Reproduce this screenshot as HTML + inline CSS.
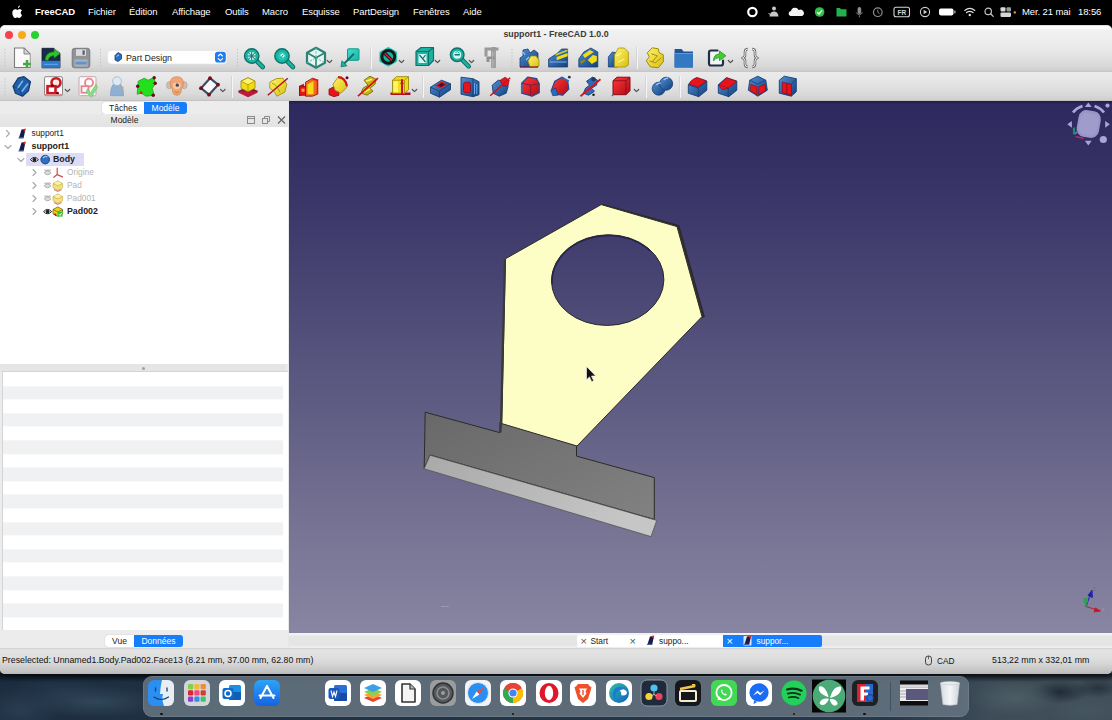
<!DOCTYPE html>
<html lang="fr">
<head>
<meta charset="utf-8">
<title>support1 - FreeCAD 1.0.0</title>
<style>
*{box-sizing:border-box;margin:0;padding:0}
html,body{width:1112px;height:720px;overflow:hidden}
body{position:relative;font-family:"Liberation Sans",sans-serif;font-size:9px;color:#222;background:#1d2b38}
.abs{position:absolute}
#desktop{left:0;top:640px;width:1112px;height:80px;
 background:
 linear-gradient(rgba(5,10,18,.0) 0,rgba(5,10,18,.0) 33px,rgba(5,10,18,.75) 34px,rgba(5,10,18,0) 42px),
 radial-gradient(ellipse 70px 16px at 95px 62px,rgba(58,80,100,.7) 0,rgba(58,80,100,0) 100%),
 radial-gradient(ellipse 40px 22px at 20px 70px,rgba(50,72,94,.6) 0,rgba(50,72,94,0) 100%),
 radial-gradient(ellipse 50px 14px at 60px 50px,rgba(40,60,82,.6) 0,rgba(40,60,82,0) 100%),
 radial-gradient(ellipse 45px 18px at 1015px 58px,rgba(78,94,102,.9) 0,rgba(78,94,102,0) 100%),
 radial-gradient(ellipse 40px 14px at 1085px 70px,rgba(70,86,96,.8) 0,rgba(70,86,96,0) 100%),
 radial-gradient(ellipse 30px 12px at 1060px 52px,rgba(24,36,48,.8) 0,rgba(24,36,48,0) 100%),
 radial-gradient(ellipse 25px 10px at 1098px 48px,rgba(28,40,52,.7) 0,rgba(28,40,52,0) 100%),
 linear-gradient(90deg,#1c2d3f 0,#1e3042 14%,#27384a 80%,#3d4c57 89%,#414f59 100%)}
#menubar{left:0;top:0;width:1112px;height:27px;background:#000;color:#fff;font-size:9.5px}
#menubar span{position:absolute;top:6px;white-space:nowrap;letter-spacing:-0.1px}
#win{left:0;top:26px;width:1112px;height:647.500px;background:#e8e8e8;border-radius:5px 5px 5px 5px;overflow:hidden;box-shadow:0 2px 6px rgba(0,0,0,.6)}
#title{left:0;top:0;width:1112px;height:18px;background:linear-gradient(#ffffff 0,#fdfdfd 2.500px,#f1f1f1 4px,#ececec 100%);}
#title .t{left:0;width:1112px;top:3px;text-align:center;font-size:8.8px;font-weight:bold;color:#3a3a3a}
.tl{width:8px;height:8px;border-radius:50%;top:4.500px}
#tb1{left:0;top:18px;width:1112px;height:28px;background:linear-gradient(#ececec 0,#e4e4e4 40%,#d8d8d8 80%,#cdcdcd 96%,#c2c2c2 100%)}
#tb2{left:0;top:46px;width:1112px;height:29px;background:linear-gradient(#ebebeb 0,#e6e6e6 30%,#dadada 75%,#cfcfcf 95%,#bcbcbc 100%)}
#left{left:0;top:75px;width:288px;height:549px;background:#ececec}
#view{left:288.500px;top:75px;width:823.500px;height:533px;background:linear-gradient(rgba(20,16,50,.55) 0,rgba(20,16,50,0) 3px),linear-gradient(#2d285d 0%,#2f2a5f 3%,#3b3769 20%,#4c4976 38%,#5a5780 52%,#747192 78%,#8986a3 100%)}
#tree{left:0;top:101px;width:288px;height:236.500px;background:#fff}
#props{left:2px;top:345px;width:286px;height:259px;background:#fff;border-left:1px solid #d4d4d4;border-top:1px solid #d4d4d4}
#status{left:0;top:622px;width:1112px;height:25.500px;background:linear-gradient(#cfcfcf 0,#e4e4e4 2px,#dedede 40%,#d3d3d3 65%,#c6c6c6 85%,#b9b9b9 100%)}

.tab{height:12px;top:76px;font-size:8.5px;text-align:center;line-height:12px;color:#222}
#tree .row{position:absolute;left:0;height:13px;width:288px;font-size:8.3px;line-height:13px;white-space:nowrap}
#tree .row span{position:absolute;top:0;z-index:4}
#tree .row span.hl{z-index:1}
#tree .chev{color:#9a9a9a;font-size:8px}
.gray{color:#b4b4b4}
#props{background:#fff linear-gradient(#fff,#fff) no-repeat}
#props i{position:absolute;left:0;top:0;width:280px;height:258px;background:repeating-linear-gradient(#fff 0,#fff 13.600px,#f0f1f3 13.600px,#f0f1f3 27.200px);background-position:0 0.400px}

#mdi{left:288.500px;top:607px;width:823.500px;height:16px;background:linear-gradient(#f3f3f3 0,#f0f0f0 2px,#e6e6e6 3px,#e4e4e4 12px,#eeeeee 14px,#ededed 100%)}
.mt{top:1.5px;height:12.5px;background:#fff;font-size:8.3px;line-height:12.5px;white-space:nowrap}
.mt span{position:absolute;top:0}
#status span{position:absolute;top:7px;font-size:8.8px;white-space:nowrap;color:#111}

#dock{left:143px;top:675.5px;width:825.5px;height:41px;border-radius:9px;background:rgba(101,115,128,.88);box-shadow:0 0 0 .5px rgba(255,255,255,.18) inset}
#dock svg{position:absolute;top:3.5px}
.dot{position:absolute;top:37px;width:2.4px;height:2.4px;border-radius:50%;background:#111}
</style>
</head>
<body>
<div id="desktop" class="abs"></div>
<div id="menubar" class="abs">
<span style="left:35px;font-weight:bold">FreeCAD</span>
<span style="left:88px">Fichier</span>
<span style="left:129px">Édition</span>
<span style="left:172px">Affichage</span>
<span style="left:225px">Outils</span>
<span style="left:262px">Macro</span>
<span style="left:302px">Esquisse</span>
<span style="left:353px">PartDesign</span>
<span style="left:413px">Fenêtres</span>
<span style="left:463px">Aide</span>
<span style="left:1022px">Mer. 21 mai</span>
<span style="left:1078px">18:56</span>
</div>
<svg class="abs" style="left:0;top:0" width="1112" height="25" viewBox="0 0 1112 25">
 <!-- apple -->
 <path d="M18.6,7.2c0.1,-1.2 0.9,-2.1 1.9,-2.4c0.1,1.2 -0.8,2.3 -1.9,2.4Z M22.3,14.6c-0.5,1.2 -1.4,2.6 -2.4,2.6c-0.8,0 -1.1,-0.5 -2,-0.5c-0.9,0 -1.3,0.5 -2,0.5c-1.2,0 -3,-2.6 -3,-5.1c0,-2.3 1.5,-3.6 3,-3.6c0.9,0 1.6,0.6 2.1,0.6c0.5,0 1.300,-0.7 2.4,-0.6c0.8,0 1.700,0.5 2.200,1.200c-1.800,1.100 -1.600,3.900 0.300,4.600Z" fill="#fff" transform="translate(-0.6,0.8)"/>
 <!-- status icons -->
 <circle cx="752.4" cy="12" r="4.2" fill="none" stroke="#fff" stroke-width="2.2"/>
 <g fill="#c8c8c8"><circle cx="774" cy="8.6" r="2"/><path d="M769.5,16.5q0.5,-5 4.5,-5q4,0 4.500,5Z"/><path d="M768.5,13.5l4,2" stroke="#c8c8c8" stroke-width="1"/></g>
 <path d="M790.5,16a2.600,2.600 0 0 1 0.500,-5.100a4,4 0 0 1 7.600,-0.800a3,3 0 0 1 3.600,5.900Z" fill="#f2f2f2"/>
 <circle cx="819.6" cy="12" r="4.800" fill="#2fc24a"/><path d="M817.200,12.200l1.800,1.800l3,-3.600" stroke="#fff" stroke-width="1.300" fill="none"/>
 <path d="M836.500,8h3.500l1,1.200h5.500v7.300h-10Z" fill="#22b24c"/>
 <rect x="857.600" y="7" width="3.600" height="7" rx="1.800" fill="#8c8c8c"/><path d="M856.200,12.500q3.200,4.500 6.400,0M859.400,15.500v1.800" stroke="#8c8c8c" stroke-width="0.900" fill="none"/>
 <circle cx="877.800" cy="12.200" r="4.300" fill="none" stroke="#8c8c8c" stroke-width="1.200"/><path d="M877.800,9.600v2.800l1.800,1" stroke="#8c8c8c" stroke-width="0.900" fill="none"/>
 <rect x="894" y="7.200" width="15.500" height="9.600" rx="2" fill="none" stroke="#d6d6d6" stroke-width="1.100"/>
 <text x="901.800" y="14.600" font-family="Liberation Sans, sans-serif" font-size="6.500" font-weight="bold" fill="#d6d6d6" text-anchor="middle">FR</text>
 <circle cx="925" cy="12" r="4.600" fill="none" stroke="#d0d0d0" stroke-width="1.100"/><path d="M923.600,9.800l3.600,2.200l-3.600,2.200Z" fill="#d0d0d0"/>
 <rect x="939" y="8.600" width="14.500" height="6.800" rx="1.800" fill="#fff"/><rect x="954.300" y="10.600" width="1.200" height="2.800" rx="0.600" fill="#bbb"/>
 <g fill="none" stroke="#dcdcdc" stroke-width="1.300" stroke-linecap="round"><path d="M964.800,10.400q5,-4 10,0"/><path d="M966.600,12.600q3.200,-2.600 6.400,0"/></g><circle cx="969.800" cy="15" r="1.200" fill="#dcdcdc"/>
 <circle cx="988.200" cy="11.400" r="3.200" fill="none" stroke="#c4c4c4" stroke-width="1.200"/><path d="M990.600,13.800l2.600,2.600" stroke="#c4c4c4" stroke-width="1.300" stroke-linecap="round"/>
 <g fill="#d8d8d8"><rect x="1000.500" y="7.200" width="5" height="4.200" rx="1"/><rect x="1006.500" y="7.200" width="4.500" height="4.200" rx="1" fill="#9a9a9a"/><rect x="1000.500" y="12.400" width="10.500" height="4.600" rx="1.200"/></g>
 <circle cx="1014.800" cy="12.400" r="1.200" fill="#f09a2a"/>
</svg>
<div class="abs" style="left:0;top:25.300px;width:1112px;height:7px;background:#fff;border-radius:5px 5px 0 0"></div>
<div id="win" class="abs">
 <div id="title" class="abs">
  <div class="abs tl" style="left:5px;background:#f4434c"></div>
  <div class="abs tl" style="left:18px;background:#f7ab1c"></div>
  <div class="abs tl" style="left:31px;background:#28d033"></div>
  <div class="abs t">support1 - FreeCAD 1.0.0</div>
 </div>
 <div id="tb1" class="abs"></div>
 <div id="tb2" class="abs"></div>
<!--TB--><svg class="abs" style="left:0;top:18px;z-index:5" width="1112" height="57" viewBox="0 44 1112 57">
<defs><linearGradient id="gbl" x1="0" y1="0" x2="1" y2="1"><stop offset="0" stop-color="#4f8fd8"/><stop offset="1" stop-color="#143f78"/></linearGradient><linearGradient id="gye" x1="0" y1="0" x2="1" y2="1"><stop offset="0" stop-color="#fff36a"/><stop offset="1" stop-color="#d9bf10"/></linearGradient><linearGradient id="gre" x1="0" y1="0" x2="1" y2="1"><stop offset="0" stop-color="#ff3a3a"/><stop offset="1" stop-color="#b00814"/></linearGradient><linearGradient id="gte" x1="0" y1="0" x2="1" y2="1"><stop offset="0" stop-color="#3fe0cf"/><stop offset="1" stop-color="#19b3a3"/></linearGradient></defs>
<rect x="4.5" y="49.0" width="1" height="1.4" fill="#c4c4c4"/><rect x="4.5" y="52.2" width="1" height="1.4" fill="#c4c4c4"/><rect x="4.5" y="55.4" width="1" height="1.4" fill="#c4c4c4"/><rect x="4.5" y="58.6" width="1" height="1.4" fill="#c4c4c4"/><rect x="4.5" y="61.8" width="1" height="1.4" fill="#c4c4c4"/><rect x="4.5" y="65.0" width="1" height="1.4" fill="#c4c4c4"/>
<rect x="100" y="49.0" width="1" height="1.4" fill="#c4c4c4"/><rect x="100" y="52.2" width="1" height="1.4" fill="#c4c4c4"/><rect x="100" y="55.4" width="1" height="1.4" fill="#c4c4c4"/><rect x="100" y="58.6" width="1" height="1.4" fill="#c4c4c4"/><rect x="100" y="61.8" width="1" height="1.4" fill="#c4c4c4"/><rect x="100" y="65.0" width="1" height="1.4" fill="#c4c4c4"/>
<rect x="237" y="49.0" width="1" height="1.4" fill="#c4c4c4"/><rect x="237" y="52.2" width="1" height="1.4" fill="#c4c4c4"/><rect x="237" y="55.4" width="1" height="1.4" fill="#c4c4c4"/><rect x="237" y="58.6" width="1" height="1.4" fill="#c4c4c4"/><rect x="237" y="61.8" width="1" height="1.4" fill="#c4c4c4"/><rect x="237" y="65.0" width="1" height="1.4" fill="#c4c4c4"/>
<g transform="translate(22.5,57.5)"><path d="M-8,-9.5h9.5l6,6v13.5h-15.500Z" fill="#fbfbfb" stroke="#7d7d7d" stroke-width="1.1" stroke-linejoin="round"/><path d="M1.500,-9.500v6h6Z" fill="#d6d6d6" stroke="#7d7d7d" stroke-width="0.9" stroke-linejoin="round"/><path d="M7,-3v12" stroke="#e2e2e2" stroke-width="1"/><path d="M4.500,2.500v8M0.500,6.500h8" stroke="#45a845" stroke-width="2.600"/></g>
<g transform="translate(51,57.8)"><path d="M-9,-9.500h12l6,5v14.500h-18Z" fill="#1a2a48" stroke="#0f1a30" stroke-width="0.8" stroke-linejoin="round"/><path d="M3,-9.500v5h6Z" fill="#eceff4"/><path d="M-6,2q1,-8 9,-8v-2.500l6,4.500l-6,4.500v-2.500q-5,0 -6,5Z" fill="#2fc22f" stroke="#0f7a12" stroke-width="0.7"/><rect x="-9" y="3" width="18" height="7" fill="#2f78cc"/><path d="M-7,6.500h14" stroke="#6aa8ea" stroke-width="1"/></g>
<g transform="translate(81,57.8)"><rect x="-8.800" y="-9.500" width="17.600" height="19.500" rx="2.500" fill="#8e9498" stroke="#70767a" stroke-width="0.9"/><rect x="-5" y="-8.500" width="10" height="6.500" fill="#dcdcdc"/><rect x="1.500" y="-7.500" width="2.200" height="4.500" fill="#5a5f63"/><rect x="-6.500" y="1.500" width="13" height="7.500" fill="#a9afb4"/><rect x="-5.500" y="4" width="11" height="2.600" fill="#5b92d8"/></g>
<rect x="107.500" y="50.500" width="119.500" height="13.500" rx="4" fill="#fff" stroke="#e0e0e0" stroke-width="0.600"/><rect x="215" y="51.800" width="10.800" height="10.800" rx="2.800" fill="#1d7cf2"/><path d="M218.200,56l2.200,-2l2.200,2M218.200,58.600l2.200,2l2.200,-2" fill="none" stroke="#fff" stroke-width="1.100" stroke-linecap="round" stroke-linejoin="round"/><path d="M115,55.500l3,-3l3.500,2v4.500l-3.500,2.500l-3,-1.500Z" fill="#2b6dba" stroke="#143f78" stroke-width="0.800"/><path d="M116.500,56.500l2.500,-1.500" stroke="#bcd8f5" stroke-width="1"/><text x="126" y="60.500" font-family="Liberation Sans, sans-serif" font-size="8.800" fill="#222">Part Design</text>
<g transform="translate(251.7,56)"><path d="M5.0,5.0L11,11" stroke="#0f7268" stroke-width="4.600" stroke-linecap="round"/><path d="M5.0,5.0L11,11" stroke="#19b3a3" stroke-width="2.600" stroke-linecap="round"/><circle r="7.2" fill="#19b3a3" stroke="#0f7268" stroke-width="1.400"/><circle r="4.200" fill="#bff3ec"/><path d="M-4.500,0h9M0,-4.500v9M-3.200,-3.200l6.400,6.400M3.200,-3.200l-6.400,6.400" stroke="#0f7268" stroke-width="1"/></g>
<g transform="translate(282,56)"><path d="M5.0,5.0L11,11" stroke="#0f7268" stroke-width="4.600" stroke-linecap="round"/><path d="M5.0,5.0L11,11" stroke="#19b3a3" stroke-width="2.600" stroke-linecap="round"/><circle r="7.2" fill="#19b3a3" stroke="#0f7268" stroke-width="1.400"/><circle r="4.200" fill="#22c9b6"/><circle cx="0.500" cy="-0.500" r="2" fill="#e9fffb"/><path d="M-1,1.500l2.500,-3" stroke="#0f7268" stroke-width="0.900"/></g>
<g transform="translate(316,57.8)"><path d="M0,-10l9,5v10l-9,5l-9,-5v-10Z" fill="#e4f5f2" stroke="#2e8278" stroke-width="2.200" stroke-linejoin="round"/><path d="M-9,-5l9,5l9,-5M0,0v10" fill="none" stroke="#2e8278" stroke-width="1.600"/><path d="M-9,5l9,-5l9,5M0,-10v10" fill="none" stroke="#5fb5aa" stroke-width="1" stroke-dasharray="2 1.500"/></g>
<path d="M327.3,60.5l2.2,2.2l2.2,-2.2" fill="none" stroke="#555" stroke-width="1.2" stroke-linecap="round" stroke-linejoin="round"/>
<g transform="translate(350,57.8)"><rect x="-2.500" y="-9" width="11.500" height="11.500" rx="1" fill="url(#gte)" stroke="#109a8c" stroke-width="1"/><path d="M4,-4L-6.500,6.500" stroke="#0f7268" stroke-width="2"/><path d="M-9,9l1,-6l5,5Z" fill="#19b3a3" stroke="#0f7268" stroke-width="0.800"/></g>
<rect x="370" y="47" width="1" height="22" fill="#d4d4d4"/><rect x="371" y="47" width="1" height="22" fill="#f6f6f6"/>
<g transform="translate(388.3,56.8)"><path d="M0,-9.500l8.500,4.800v9.400l-8.500,4.800l-8.500,-4.800v-9.400Z" fill="#19b3a3" stroke="#2ad0bd" stroke-width="0.800"/><circle r="6.400" fill="none" stroke="#181818" stroke-width="3"/><path d="M-4.300,-4.300l8.600,8.600" stroke="#181818" stroke-width="3.400"/><path d="M-3.600,-3.600l7.200,7.200" stroke="#e01822" stroke-width="1.500"/></g>
<path d="M399.3,60.5l2.2,2.2l2.2,-2.2" fill="none" stroke="#555" stroke-width="1.2" stroke-linecap="round" stroke-linejoin="round"/>
<g transform="translate(424.5,57)"><path d="M-8.500,-5.500l5,-4h12.500v13l-5,5h-12.500Z" fill="#19b3a3" stroke="#0f7268" stroke-width="1.200" stroke-linejoin="round"/><path d="M-8.500,-5.500h12.500v14M4,-5.500l5,-4" fill="none" stroke="#0f7268" stroke-width="1.100"/><rect x="-6" y="-3" width="8" height="9" fill="#d8f6f2"/><path d="M-5,-2l6,7M1,-2l-3,4" stroke="#0f7268" stroke-width="1.200"/></g>
<path d="M435.3,60.5l2.2,2.2l2.2,-2.2" fill="none" stroke="#555" stroke-width="1.2" stroke-linecap="round" stroke-linejoin="round"/>
<g transform="translate(457.2,54.8)"><path d="M4.8,4.8L11.5,11.5" stroke="#0f7268" stroke-width="4.600" stroke-linecap="round"/><path d="M4.8,4.8L11.5,11.5" stroke="#19b3a3" stroke-width="2.600" stroke-linecap="round"/><circle r="6.8" fill="#19b3a3" stroke="#0f7268" stroke-width="1.400"/><circle r="4" fill="#d4f7f2"/><path d="M-2.600,0h5.200" stroke="#0f7268" stroke-width="1.500"/><path d="M-2,-2.500q3,-1.500 4.500,1" stroke="#19b3a3" stroke-width="1" fill="none"/></g>
<path d="M469.3,60.5l2.2,2.2l2.2,-2.2" fill="none" stroke="#555" stroke-width="1.2" stroke-linecap="round" stroke-linejoin="round"/>
<g transform="translate(492.5,57.5)"><path d="M-1,-10h4v20h-4Z" fill="#a4a4a4" stroke="#8a8a8a" stroke-width="0.600"/><path d="M-8,-10h14v3h-4v2h-3v-2h-4v6h-3Z" fill="#9a9a9a"/><path d="M-6,-1h8v2.500h-5v3h-3Z" fill="#8f8f8f"/><path d="M0,-6v15" stroke="#c8c8c8" stroke-width="0.800" stroke-dasharray="1 1"/></g>
<rect x="511.5" y="49.0" width="1" height="1.4" fill="#c4c4c4"/><rect x="511.5" y="52.2" width="1" height="1.4" fill="#c4c4c4"/><rect x="511.5" y="55.4" width="1" height="1.4" fill="#c4c4c4"/><rect x="511.5" y="58.6" width="1" height="1.4" fill="#c4c4c4"/><rect x="511.5" y="61.8" width="1" height="1.4" fill="#c4c4c4"/><rect x="511.5" y="65.0" width="1" height="1.4" fill="#c4c4c4"/>
<g transform="translate(529,58)"><path d="M-9,9v-9l3,-2v-6l5,-1l2,4l4,-3l4,3v14Z" fill="url(#gbl)" stroke="#143f78" stroke-width="0.800" stroke-linejoin="round"/><path d="M-6,-6l2,3M-3,2l3,-3" stroke="#9cc8f5" stroke-width="1.200"/><path d="M-1,3l3,-5h5l3,4v6l-3,1h-6Z" fill="url(#gye)" stroke="#9a8a0a" stroke-width="0.700"/><path d="M-9,9h18" stroke="#8a0a18" stroke-width="1"/></g>
<g transform="translate(558.6,58)"><path d="M-10,9v-8l9,-6l4,-4h6v18Z" fill="url(#gbl)" stroke="#143f78" stroke-width="0.800" stroke-linejoin="round"/><path d="M-2,-1l11,-4v3.200l-11,4Z" fill="#f2dc18"/><path d="M-3,-4l12,-4.500v1.800l-12,4.500Z" fill="#f2dc18" opacity=".85"/><path d="M-9,4h17" stroke="#7fb2ea" stroke-width="1"/></g>
<g transform="translate(588.8,58)"><path d="M-10,9v-8l5,-7l7,-4l7,4v15Z" fill="url(#gbl)" stroke="#143f78" stroke-width="0.800" stroke-linejoin="round"/><path d="M-6,-3l7,-5l4,2l-9,6Z" fill="#f2dc18"/><path d="M-1,2l5,-5l4,1v5l-5,3Z" fill="#f2dc18"/><path d="M-8,5l4,-3" stroke="#9a8a0a" stroke-width="2"/></g>
<g transform="translate(618.4,58)"><path d="M-10,9v-10l4,-5l5,1v14Z" fill="url(#gbl)" stroke="#143f78" stroke-width="0.800" stroke-linejoin="round"/><path d="M-4,-3l4,-7h6l4,4v13l-3,2h-11Z" fill="url(#gye)" stroke="#9a8a0a" stroke-width="0.700" stroke-linejoin="round"/><path d="M-2,-2l5,-3M0,4l6,-3" stroke="#fff79a" stroke-width="1.300"/></g>
<rect x="636" y="47" width="1" height="22" fill="#d4d4d4"/><rect x="637" y="47" width="1" height="22" fill="#f6f6f6"/>
<g transform="translate(654.3,57.8)"><path d="M-2,-10l6,1l1,4l4,2v7l-5,6l-8,-1l-4,-6l3,-4l-2,-4Z" fill="url(#gye)" stroke="#9a8a0a" stroke-width="1" stroke-linejoin="round"/><path d="M-3,-4l6,2l-5,6M-5,3l6,2l6,-5" fill="none" stroke="#9a8a0a" stroke-width="0.900"/></g>
<g transform="translate(683.8,58)"><path d="M-9.200,-9h7l2,2.500h9.400v16h-18.400Z" fill="#1f5596"/><rect x="-9.200" y="-5" width="18.400" height="14.500" rx="0.800" fill="#3378c2"/><path d="M-9.200,-4.500h18.400" stroke="#5b9ae0" stroke-width="1"/></g>
<g transform="translate(716.5,58)"><path d="M1,-7.500h-6.500q-2,0 -2,2v11q0,2 2,2h10q2,0 2,-2v-3" fill="#f2f4f6" stroke="#1c2e4a" stroke-width="2.200" stroke-linecap="round"/><path d="M-3,3q0,-7 6,-7v-3l6.500,4.800l-6.500,4.800v-3q-4,0 -6,3.400Z" fill="#3ccf2f" stroke="#1c8a18" stroke-width="0.700"/></g>
<path d="M728.3,60.5l2.2,2.2l2.2,-2.2" fill="none" stroke="#555" stroke-width="1.2" stroke-linecap="round" stroke-linejoin="round"/>
<g transform="translate(750,58)"><path d="M-2,-9q-3,0 -3,3v3q0,2.500 -2.500,3q2.500,0.500 2.500,3v3q0,3 3,3M2,-9q3,0 3,3v3q0,2.500 2.500,3q-2.500,0.500 -2.500,3v3q0,3 -3,3" fill="none" stroke="#6d6d6d" stroke-width="2.600" stroke-linejoin="round"/><path d="M-2,-9q-3,0 -3,3v3q0,2.500 -2.500,3q2.500,0.500 2.500,3v3q0,3 3,3M2,-9q3,0 3,3v3q0,2.500 2.500,3q-2.500,0.500 -2.500,3v3q0,3 -3,3" fill="none" stroke="#f0f0f0" stroke-width="0.900"/></g>
<rect x="4.5" y="78.0" width="1" height="1.4" fill="#c4c4c4"/><rect x="4.5" y="81.2" width="1" height="1.4" fill="#c4c4c4"/><rect x="4.5" y="84.4" width="1" height="1.4" fill="#c4c4c4"/><rect x="4.5" y="87.6" width="1" height="1.4" fill="#c4c4c4"/><rect x="4.5" y="90.8" width="1" height="1.4" fill="#c4c4c4"/><rect x="4.5" y="94.0" width="1" height="1.4" fill="#c4c4c4"/>
<g transform="translate(21.5,86.2)"><path d="M-8.500,0l5,-8l6,-1.500l6.500,5l-2,9l-6,5.500l-7,-3Z" fill="#1f5ea8" stroke="#123a70" stroke-width="1.200" stroke-linejoin="round"/><path d="M-4,2l5,-7M0.500,5l5.500,-7" stroke="#7fb4ea" stroke-width="1.600" stroke-linecap="round"/><path d="M-8.500,0l7,3l2,7" fill="none" stroke="#143f78" stroke-width="0.800"/></g>
<g transform="translate(53.5,86.2)"><rect x="-9" y="-9.500" width="18" height="19" rx="1.500" fill="#fafafa" stroke="#8a8a8a" stroke-width="1"/><circle cx="2.500" cy="-3.500" r="4.500" fill="#fdeaea" stroke="#cc1822" stroke-width="2.600"/><rect x="-6" y="0" width="8" height="7" fill="#fff" stroke="#cc1822" stroke-width="2.600"/><circle cx="-1" cy="-0.500" r="1.400" fill="#5a0a14"/><circle cx="4" cy="7" r="1.400" fill="#5a0a14"/><path d="M-9,8.500h18" stroke="#e08a90" stroke-width="1.400"/></g>
<path d="M65.3,89.5l2.2,2.2l2.2,-2.2" fill="none" stroke="#555" stroke-width="1.2" stroke-linecap="round" stroke-linejoin="round"/>
<g transform="translate(87.5,86.2)"><rect x="-8.500" y="-9.500" width="17" height="19" rx="1.500" fill="#fbfbfb" stroke="#c9a4a8" stroke-width="1"/><circle cx="1.500" cy="-3.500" r="4" fill="none" stroke="#e6858b" stroke-width="1.800"/><rect x="-6" y="0" width="7" height="6.500" fill="#fff" stroke="#e6858b" stroke-width="1.800"/><path d="M0,2.500l3,4l5.500,-8.500l1.500,3l-6,10l-5.500,-5Z" fill="#8fd98a" stroke="#6cbf68" stroke-width="0.600"/></g>
<g transform="translate(117,86.2)"><path d="M-6.500,9.500q0,-10 4,-12h5q4,2 4,12Z" fill="#8eb0d2" stroke="#7a9cc0" stroke-width="0.700"/><circle cx="0" cy="-5" r="4.400" fill="#dfe9f2" stroke="#9bb6d0" stroke-width="0.800"/><path d="M3,3l3.500,-2" stroke="#caa48a" stroke-width="1.600"/></g>
<g transform="translate(146.2,86.2)"><path d="M-8,-5l6,-3l4,2l6,-3l1,7l-3,4l2,7l-8,1l-5,-3l-4,1Z" fill="#23e01c" stroke="#18a814" stroke-width="0.800" stroke-linejoin="round"/><circle cx="8" cy="-8.500" r="1.700" fill="#6a0a14"/><circle cx="9" cy="-3" r="1.700" fill="#6a0a14"/><circle cx="-8.500" cy="0" r="1.700" fill="#6a0a14"/><circle cx="7" cy="9" r="1.700" fill="#6a0a14"/><circle cx="-5" cy="6.500" r="1.300" fill="#c01a1a"/></g>
<g transform="translate(176.8,86.2)"><ellipse cx="-7.500" cy="-1" rx="2.800" ry="3.600" fill="#d9b9a4" stroke="#a9a9a9" stroke-width="0.700"/><ellipse cx="7.500" cy="-1" rx="2.800" ry="3.600" fill="#d9b9a4" stroke="#a9a9a9" stroke-width="0.700"/><path d="M-6.500,-3q0,-6.500 6.500,-6.500q6.500,0 6.500,6.500q0,4 -2,6q0,6 -4.500,6q-4.500,0 -4.500,-6q-2,-2 -2,-6Z" fill="#f2a572" stroke="#c9855a" stroke-width="0.700"/><path d="M-4,-2q2,-3 4,0q2,-3 4,0q0,5 -4,5q-4,0 -4,-5Z" fill="#f7c9a4"/><circle cx="0.500" cy="-1" r="1.600" fill="#394a66"/><path d="M-2,5.500q2,1.500 4,0" stroke="#b06a44" stroke-width="0.800" fill="none"/></g>
<g transform="translate(209.5,86.2)"><path d="M-8.500,2l9,-10l8,6.500l-9,10Z" fill="#f6f8fa" stroke="#3c4e60" stroke-width="2.200" stroke-linejoin="round"/><circle cx="-8.500" cy="2" r="1.900" fill="#7a0a1a"/><circle cx="0.500" cy="-8" r="1.900" fill="#7a0a1a"/><circle cx="8.500" cy="-1.500" r="1.900" fill="#7a0a1a"/><circle cx="-0.500" cy="8.500" r="1.900" fill="#7a0a1a"/></g>
<path d="M220.60000000000002,89.5l2.2,2.2l2.2,-2.2" fill="none" stroke="#555" stroke-width="1.2" stroke-linecap="round" stroke-linejoin="round"/>
<rect x="231" y="76" width="1" height="22" fill="#d4d4d4"/><rect x="232" y="76" width="1" height="22" fill="#f6f6f6"/>
<g transform="translate(248,86.2)"><path d="M-9.500,5l9.500,-4l9.500,4l-9.500,4.500Z" fill="#8a1030" stroke="#5a0a20" stroke-width="0.800"/><path d="M-9.500,5v1.500l9.500,4.500l9.500,-4.500v-1.500" fill="#c01a3a"/><path d="M-7,-5l7,-3.500l7,3.500v7l-7,3.500l-7,-3.500Z" fill="#f2dc18" stroke="#9a8a0a" stroke-width="0.800" stroke-linejoin="round"/><path d="M-7,-5l7,3.500l7,-3.500l-7,-3.500Z" fill="#fff36a" stroke="#9a8a0a" stroke-width="0.700"/><path d="M0,-1.500v7" stroke="#9a8a0a" stroke-width="0.700"/></g>
<g transform="translate(277.8,86.2)"><path d="M-8,-4q6,-5 13,-4l4,6l-2,8l-8,4q-2,-6 -7,-8Z" fill="url(#gye)" stroke="#9a8a0a" stroke-width="0.800" stroke-linejoin="round"/><path d="M-6,-3q5,1 8,9" fill="none" stroke="#9a8a0a" stroke-width="0.800"/><path d="M-10,9l20,-17" stroke="#b01020" stroke-width="1.500"/></g>
<g transform="translate(308.5,86.2)"><path d="M-9,0l4,-2v10l-4,1.500Z" fill="#e8141c" stroke="#8a0a18" stroke-width="0.700"/><rect x="-9" y="0" width="7" height="9" fill="#e8141c" stroke="#8a0a18" stroke-width="0.800"/><rect x="-7" y="2.500" width="3" height="3" fill="#ffb12a"/><path d="M-3,-4l7,-4l5,2v14l-5,2h-7Z" fill="#f26a1a" stroke="#8a0a18" stroke-width="0.800" stroke-linejoin="round"/><path d="M-1,-2l6,-3v13h-6Z" fill="#f2dc18"/><path d="M4,-7.500l5,1.500v14" fill="none" stroke="#e01818" stroke-width="1.600"/></g>
<g transform="translate(338,86.2)"><path d="M-9,3l6,-3l4,3v6l-5,1.500l-5,-2Z" fill="#e8141c" stroke="#8a0a18" stroke-width="0.800" stroke-linejoin="round"/><path d="M-5,-2l5,-7l7,3l2,7l-6,6l-6,-3Z" fill="url(#gye)" stroke="#9a8a0a" stroke-width="0.800" stroke-linejoin="round"/><path d="M0,-9q7,0 9,9" fill="none" stroke="#d01818" stroke-width="2.200"/><circle cx="9" cy="-8.500" r="1.500" fill="#5a0a20"/></g>
<g transform="translate(368,86.2)"><path d="M-4,-6l6,-4l6,3l-1,5l-5,4l3,3l-6,4l-6,-2l2,-5l5,-3Z" fill="#c9b418" stroke="#7a6c0a" stroke-width="0.900" stroke-linejoin="round"/><path d="M-2,-5l6,-2M-4,6l6,-3" stroke="#fff36a" stroke-width="1.500"/><path d="M-10,10l20,-18" stroke="#d01018" stroke-width="1.600"/></g>
<g transform="translate(400.5,86.2)"><path d="M-10,7.500h20" stroke="#b01020" stroke-width="2.400"/><path d="M-8,-6l4,-3.500h12v13l-4,3.500h-12Z" fill="#f2dc18" stroke="#9a8a0a" stroke-width="0.900" stroke-linejoin="round"/><path d="M-8,-6h12v13M4,-6l4,-3.500" fill="none" stroke="#9a8a0a" stroke-width="0.800"/><rect x="-7" y="-5" width="4.500" height="11" fill="#fff36a"/><path d="M1.500,-7v15" stroke="#d01018" stroke-width="2"/><circle cx="1.500" cy="-3" r="1.500" fill="#d01018"/></g>
<path d="M412.3,89.5l2.2,2.2l2.2,-2.2" fill="none" stroke="#555" stroke-width="1.2" stroke-linecap="round" stroke-linejoin="round"/>
<rect x="422" y="76" width="1" height="22" fill="#d4d4d4"/><rect x="423" y="76" width="1" height="22" fill="#f6f6f6"/>
<g transform="translate(440.5,86.2)"><path d="M-10,1l11,-7l9,3.500v6l-11,7.500l-9,-4Z" fill="url(#gbl)" stroke="#143f78" stroke-width="0.900" stroke-linejoin="round"/><path d="M-10,1l9,4l11,-7.500M-1,5v6" fill="none" stroke="#143f78" stroke-width="0.800"/><path d="M-4,-0.500l5,-3.500l4.500,2l-5,3.500Z" fill="#4a0a28" stroke="#d8141c" stroke-width="1.300"/></g>
<g transform="translate(470,86.2)"><path d="M-9,-9l12,1.500l6,3v13l-6,2l-12,-2.500Z" fill="url(#gbl)" stroke="#143f78" stroke-width="0.900" stroke-linejoin="round"/><path d="M3,-7.500v18" stroke="#143f78" stroke-width="0.800"/><rect x="-6.500" y="-4" width="7" height="10.500" rx="2" fill="#e8141c" stroke="#8a0a18" stroke-width="0.700"/><path d="M4.500,-3v11M6.800,-2v10" stroke="#6aa8ea" stroke-width="1"/></g>
<g transform="translate(500.2,86.2)"><path d="M-8,-1l6,-5l6,1l4,5l-2,7l-7,3l-6,-3Z" fill="url(#gbl)" stroke="#143f78" stroke-width="0.900" stroke-linejoin="round"/><path d="M0,-6l5,-3l4,3l-1,5l-5,1Z" fill="#e8141c" stroke="#8a0a18" stroke-width="0.700"/><path d="M-10,9.500l20,-18" stroke="#d01018" stroke-width="1.500"/></g>
<g transform="translate(530.2,86.2)"><path d="M-8.500,-3l6,-6l9,1.500l2.500,5v9l-7,3.500l-10.500,-3Z" fill="url(#gre)" stroke="#2a4a8a" stroke-width="1.300" stroke-linejoin="round"/><path d="M-8.500,-3l9,2l8.500,-1.500M0.500,-1v11" fill="none" stroke="#7a1a3a" stroke-width="0.900"/><path d="M-8.500,-3v10" stroke="#2f74c0" stroke-width="1.600"/></g>
<g transform="translate(559.8,86.2)"><path d="M-8,3l3,-8l7,-4l6,4l1,8l-6,6l-8,-1Z" fill="url(#gre)" stroke="#2a4a8a" stroke-width="1.200" stroke-linejoin="round"/><path d="M-9,4l5,-2l2,7l-5,0.500Z" fill="#2b6dba" stroke="#143f78" stroke-width="0.700"/><path d="M2,-9l7,4" stroke="#2b6dba" stroke-width="1.800"/><circle cx="9.500" cy="-9" r="1.400" fill="#2a3a5a"/></g>
<g transform="translate(590.5,86.2)"><path d="M-4,-5l6,-4l5,3l-1,5l-5,3l3,3l-6,4l-5,-2l2,-5l4,-3Z" fill="#2b6dba" stroke="#143f78" stroke-width="0.900" stroke-linejoin="round"/><circle cx="3" cy="-7" r="2.200" fill="#2a3a5a"/><path d="M-10,10l20,-17" stroke="#e01018" stroke-width="1.800"/><circle cx="3" cy="8.500" r="1.300" fill="#222"/></g>
<g transform="translate(621.5,86.2)"><path d="M-8.500,-5.500l4,-3.500h13v13.500l-4,4h-13Z" fill="url(#gre)" stroke="#8a0a18" stroke-width="1" stroke-linejoin="round"/><path d="M-8.500,-5.500h13v14M4.500,-5.500l4,-3.500" fill="none" stroke="#8a0a18" stroke-width="0.800"/><path d="M-8.500,8.500l-1,1.500" stroke="#2b6dba" stroke-width="1.200"/></g>
<path d="M634.3,89.5l2.2,2.2l2.2,-2.2" fill="none" stroke="#555" stroke-width="1.2" stroke-linecap="round" stroke-linejoin="round"/>
<rect x="645" y="76" width="1" height="22" fill="#d4d4d4"/><rect x="646" y="76" width="1" height="22" fill="#f6f6f6"/>
<g transform="translate(662.2,86.2)"><circle cx="-3.500" cy="2.500" r="6.500" fill="url(#gbl)" stroke="#143f78" stroke-width="0.800"/><circle cx="4" cy="-2.500" r="6.500" fill="url(#gbl)" stroke="#143f78" stroke-width="0.800"/><path d="M-6,-1q2,-2.500 4.500,-2M1.500,-6q2,-2.500 4.500,-2" stroke="#9cc8f5" stroke-width="1.200" fill="none"/></g>
<rect x="679" y="76" width="1" height="22" fill="#d4d4d4"/><rect x="680" y="76" width="1" height="22" fill="#f6f6f6"/>
<g transform="translate(697.8,86.2)"><path d="M-9.500,-1.500l8,-7l10.500,3.500v9l-8,6.500l-10.500,-3.500Z" fill="url(#gbl)" stroke="#143f78" stroke-width="0.900" stroke-linejoin="round"/><path d="M-9,-2q3,-6 9,-6.500l8.500,3l-8,6.500Z" fill="#e8141c" stroke="#8a0a18" stroke-width="0.700"/><path d="M-9.500,-1.500l10,3.500l8.500,-6.500M0.500,2v8.500" fill="none" stroke="#143f78" stroke-width="0.800"/></g>
<g transform="translate(727.8,86.2)"><path d="M-9.500,-1.500l8,-7l10.500,3.500v9l-8,6.500l-10.500,-3.500Z" fill="url(#gbl)" stroke="#143f78" stroke-width="0.900" stroke-linejoin="round"/><path d="M-9,-1l8,-7.500l10,3.500l-8.500,7Z" fill="#e8141c" stroke="#8a0a18" stroke-width="0.700"/><path d="M-9.500,-1l4,4.500l6,-1.500" fill="#e8141c" stroke="#8a0a18" stroke-width="0.600"/><path d="M0.500,2v8.500" stroke="#143f78" stroke-width="0.800"/></g>
<g transform="translate(757.8,86.2)"><path d="M-8,-6l8,-4l8,4l1.500,10l-9.500,6l-9.500,-6Z" fill="url(#gbl)" stroke="#143f78" stroke-width="0.900" stroke-linejoin="round"/><path d="M-7,-2l6,2.500v8l-6.500,-4Z" fill="#e8141c" stroke="#8a0a18" stroke-width="0.600"/><path d="M1,0.500l6,-2.500l0.800,6.500l-6.800,4Z" fill="#e8141c" stroke="#8a0a18" stroke-width="0.600"/><path d="M-8,-6l8,4l8,-4" fill="none" stroke="#143f78" stroke-width="0.800"/></g>
<g transform="translate(787.8,86.2)"><path d="M-8.500,-6l5,-4l12,2.500v13l-5,4.500l-12,-3Z" fill="url(#gbl)" stroke="#143f78" stroke-width="0.900" stroke-linejoin="round"/><path d="M-5.500,-4l9,2v11l-9,-2.500Z" fill="#e8141c" stroke="#8a0a18" stroke-width="0.700"/><path d="M-1,-3v11" stroke="#8a0a18" stroke-width="0.900"/><path d="M3.500,-2l5,-5.500" stroke="#143f78" stroke-width="0.800"/></g>
</svg>
<!--/TB-->
 <div id="left" class="abs">
  <div class="abs tab" style="left:102px;top:1px;width:42px;height:12px;background:#fff;border-radius:3px 0 0 3px;box-shadow:0 0 1px rgba(0,0,0,.35)">Tâches</div>
  <div class="abs tab" style="left:144px;top:1px;width:43px;height:12px;background:#167efb;color:#fff;border-radius:0 3px 3px 0">Modèle</div>
  <div class="abs" style="left:0;top:13px;width:288px;height:13px;background:linear-gradient(#e9e9e9,#e3e3e3)"></div>
  <div class="abs" style="left:0;top:14px;width:249px;text-align:center;font-size:8.5px;line-height:11px;color:#222">Modèle</div>
  <svg class="abs" style="left:245px;top:14px" width="43" height="12" viewBox="245 115 43 12" fill="none" stroke="#8a8a8a" stroke-width="1">
   <rect x="247.5" y="116.5" width="7" height="7"/><path d="M247.5,118.5h7"/>
   <rect x="262.5" y="118.5" width="5" height="5"/><path d="M264.5,118.5v-2h5v5h-2"/>
   <path d="M278,116.5l7,7M285,116.5l-7,7" stroke="#666" stroke-width="1.2"/>
  </svg>
  <div class="abs" style="left:0;top:262.500px;width:286px;height:8.500px;background:#e5e5e5"></div>
  <div class="abs" style="left:142px;top:266px;width:3px;height:3px;border-radius:50%;background:#a0a0a0"></div>
  <div class="abs tab" style="left:105px;top:534px;width:29px;height:12px;background:#fff;border-radius:3px 0 0 3px;box-shadow:0 0 1px rgba(0,0,0,.35)">Vue</div>
  <div class="abs tab" style="left:134px;top:534px;width:49px;height:12px;background:#167efb;color:#fff;border-radius:0 3px 3px 0">Données</div>
 </div>
 <div id="tree" class="abs">
  <svg class="abs" style="left:0;top:0;z-index:3" width="100" height="95" viewBox="0 127 100 95">
   <g fill="none" stroke="#a9a9a9" stroke-width="1.1" stroke-linecap="round" stroke-linejoin="round">
    <path d="M6.5,130.5l3,3l-3,3"/>
    <path d="M5,145.5l3,3l3,-3"/>
    <path d="M18,158.5l3,3l3,-3"/>
    <path d="M33,169.5l3,3l-3,3"/><path d="M33,182.5l3,3l-3,3"/><path d="M33,195.5l3,3l-3,3"/><path d="M33,208.5l3,3l-3,3"/>
   </g>
   <!-- document icons -->
   <g id="docic">
    <path d="M21.5,129.5l4,-0.5l-1.8,8.8l-4.8,0.2Z" fill="#161a4a"/>
    <path d="M22.5,129.2l3.2,-0.6l-0.7,3.4Z" fill="#d32b2b"/>
    <path d="M18.6,137.2l5.2,0l-0.2,1.2l-5.2,0Z" fill="#3c5fa8"/>
   </g>
   <use href="#docic" y="13"/>
   <!-- eye visible -->
   <g id="eye"><path d="M30.4,159.6q4,-4.4 8,0q-4,4.4 -8,0Z" fill="#fff" stroke="#222" stroke-width="1"/><circle cx="34.4" cy="159.6" r="1.9" fill="#222"/></g>
   <use href="#eye" x="13.2" y="52"/>
   <!-- body icon -->
   <circle cx="45.2" cy="159.6" r="4.3" fill="#2f6fc4" stroke="#143a73" stroke-width="0.9"/>
   <path d="M43,158.2q2,-3 4.4,-1.3" stroke="#9cc6f3" stroke-width="1.2" fill="none"/>
   <!-- hidden eyes -->
   <g id="heye"><path d="M44.2,172.8q3.4,-3.8 6.8,0q-3.4,3.8 -6.8,0Z" fill="#ddd" stroke="#a5a5a5" stroke-width="0.9"/><path d="M44.4,170.2l6.4,0" stroke="#a5a5a5" stroke-width="1"/></g>
   <use href="#heye" y="13"/><use href="#heye" y="26"/>
   <!-- origin icon -->
   <path d="M57.2,168l0,6.5l5.2,2.4M57.2,174.5l-3.4,2.8" fill="none" stroke="#d04a4a" stroke-width="1.2" stroke-linecap="round"/>
   <!-- pad icons faded -->
   <g id="padf"><path d="M53,183.5l4.8,-2.6l4.8,2.6l0,4.2l-4.8,2.6l-4.8,-2.6Z" fill="#f3e27a" stroke="#c9b44c" stroke-width="0.7"/><path d="M53,183.5l4.8,2.4l4.8,-2.4" fill="none" stroke="#c9b44c" stroke-width="0.7"/><path d="M54,189.5l3.8,1.8l3.8,-1.8" stroke="#d98080" stroke-width="1.2" fill="none"/><ellipse cx="57.8" cy="183.3" rx="3" ry="1.4" fill="#fbf3b5"/></g>
   <use href="#padf" y="13"/>
   <!-- pad002 icon -->
   <g><path d="M53,209.5l4.8,-2.6l4.8,2.6l0,4.2l-4.8,2.6l-4.8,-2.6Z" fill="#e6d516" stroke="#6d6508" stroke-width="0.8"/><path d="M53,209.5l4.8,2.4l4.8,-2.4" fill="none" stroke="#6d6508" stroke-width="0.7"/><path d="M53.2,214l3,2.6l0,-3Z" fill="#b01818"/><rect x="57.6" y="211.6" width="5" height="5" fill="#35c435"/><path d="M59,214.2l1,1.2l1.8,-2.6" stroke="#fff" stroke-width="0.9" fill="none"/></g>
  </svg>
  <div class="row" style="top:0"><span style="left:31.500px">support1</span></div>
  <div class="row" style="top:13px;font-weight:bold;font-size:8.800px"><span style="left:31.500px">support1</span></div>
  <div class="row" style="top:26px;font-weight:bold;font-size:8.800px"><span class="hl" style="left:26px;width:58px;height:13px;background:#dcdcf6;border-radius:1px"></span><span style="left:53px">Body</span></div>
  <div class="row gray" style="top:39px"><span style="left:67px">Origine</span></div>
  <div class="row gray" style="top:52px"><span style="left:67px">Pad</span></div>
  <div class="row gray" style="top:65px"><span style="left:67px">Pad001</span></div>
  <div class="row" style="top:78px;font-weight:bold;font-size:8.800px"><span style="left:67px">Pad002</span></div>
 </div>
 <div id="props" class="abs"><i></i></div>
<div id="view" class="abs">
<svg class="abs" style="left:0;top:0" width="823" height="533" viewBox="289 101 823 533">
 <defs>
  <linearGradient id="gdk" x1="0" y1="0" x2="1" y2="1"><stop offset="0" stop-color="#686868"/><stop offset="1" stop-color="#828282"/></linearGradient>
  <linearGradient id="glt" x1="0" y1="0" x2="1" y2="0.3"><stop offset="0" stop-color="#a9a9a9"/><stop offset="1" stop-color="#c6c6c6"/></linearGradient>
 </defs>
 <!-- base plate (dark face) -->
 <polygon points="425.2,412.2 500,432.7 500,422 576.5,445.6 576.5,456.1 654.3,477.6 654.3,519.4 430,455 424.2,468.5" fill="url(#gdk)" stroke="#2b2b2b" stroke-width="1" stroke-linejoin="round"/>
 <!-- light bottom strip -->
 <polygon points="430,455.2 656.7,520.4 651,536.6 424.2,468.8" fill="url(#glt)" stroke="#555" stroke-width="0.8" stroke-linejoin="round"/>
 <!-- yellow plate side (thickness) -->
 <polygon points="601.5,204.2 678.8,225.6 704.2,316.4 702,317.5 676.5,227.5 601.2,205.5" fill="#333" stroke="#2a2a2a" stroke-width="1.2" stroke-linejoin="round"/>
 <!-- yellow plate with hole -->
 <path fill-rule="evenodd" d="M601.2,204.6 L677,226.6 L702,316.6 L577,446 L501.8,423.6 L505.4,258.8 Z M551.500,280.300 a56.200,45.300 -2 1 0 112.400,-0.400 a56.200,45.300 -2 1 0 -112.400,0.400 Z" fill="#fdfdc6" stroke="#2a2a2a" stroke-width="1" stroke-linejoin="round"/>
 <!-- hole inner edge -->
 <path d="M552.200,284 a55.600,44.700 -2 0 1 98,-33" fill="none" stroke="#26264a" stroke-width="1.600"/>
 <!-- left side edge of yellow -->
 <path d="M505,258.800 L501,423.600 L500.400,432.400" fill="none" stroke="#3a3a3a" stroke-width="2.200"/>
 <!-- mouse cursor -->
 <path d="M586.5,366.5 l0,13.2 l3,-2.8 l2.2,4.8 l2,-0.9 l-2.2,-4.7 l4.2,-0.2 Z" fill="#111" stroke="#eee" stroke-width="0.7"/>
 <!-- nav cube -->
 <g>
  <rect x="1077.5" y="110.5" width="22.500" height="27" rx="8" transform="rotate(10 1088.700 124)" fill="#9995c6"/>
  <rect x="1079.500" y="113" width="18.500" height="22" rx="6.500" transform="rotate(10 1088.700 124)" fill="#9f9bcb"/>
  <g fill="#a9a5d6">
   <path d="M1088.300,102.500l3.400,4.600h-6.800Z"/><path d="M1088.300,145.400l3.400,-4.600h-6.800Z"/>
   <path d="M1067.300,124.300l4.600,-3.400v6.800Z"/><path d="M1109.800,124.300l-4.600,-3.400v6.800Z"/>
   <circle cx="1107.500" cy="105.600" r="2.100"/><circle cx="1103.300" cy="139.500" r="3.600"/>
  </g>
  <path d="M1073,112.500q3.500,-4.500 9.500,-6.500" fill="none" stroke="#a9a5d6" stroke-width="2.800"/>
  <path d="M1094.500,106q6,2 9.500,6.500" fill="none" stroke="#a9a5d6" stroke-width="2.800"/>
  <path d="M1074,127.500v7" stroke="#1f8a6a" stroke-width="2.200"/><path d="M1075.500,136.500l8,2" stroke="#b0305a" stroke-width="1.600"/><path d="M1075,134l3,-3" stroke="#6a78d8" stroke-width="1.400"/>
 </g>
 <!-- axis cross -->
 <g fill="none" stroke-linecap="round">
  <path d="M1086,606.500l3.200,-9" stroke="#2a2ab0" stroke-width="1.200"/><path d="M1091.800,590.500l-3.800,5l4,1.800Z" fill="#1f1fae" stroke="#1f1fae" stroke-width="1"/>
  <path d="M1086,606.500l9,2.800" stroke="#b02a3a" stroke-width="1.200"/><path d="M1100.200,610.800l-5,-2.800l-1,3.600Z" fill="#c01a2a" stroke="#c01a2a" stroke-width="1"/>
  <path d="M1086,606.500l0,-4" stroke="#2a9a4a" stroke-width="1.400"/><path d="M1084.600,598l3.200,0.600l-0.800,4.400l-2.800,-0.600Z" fill="#2aa54a" stroke="#2aa54a" stroke-width="1"/>
  <path d="M1093.200,587.500l2.400,0l-2.400,3l2.400,0" stroke="#77748f" stroke-width="0.900"/>
  <path d="M1102,608l2.400,3.200M1104.400,608l-2.400,3.200" stroke="#a08a9f" stroke-width="0.800"/>
 </g>
 <rect x="441" y="606" width="8" height="1" fill="#9a98b3"/>
</svg>
</div>
 <div id="mdi" class="abs">
  <div class="abs mt" style="left:288.5px;width:49px;border-radius:2px 0 0 2px"><span style="left:3.500px;font-size:11px;color:#555">×</span><span style="left:13.5px">Start</span></div>
  <div class="abs mt" style="left:337.5px;width:97px"><span style="left:3.500px;font-size:11px;color:#555">×</span><span style="left:33px">suppo...</span></div>
  <div class="abs mt" style="left:434.5px;width:98.5px;background:#167efb;color:#fff;border-radius:0 2px 2px 0"><span style="left:3.500px;font-size:11px">×</span><span style="left:33.5px">suppor...</span></div>
  <svg class="abs" style="left:355px;top:2px" width="120" height="12" viewBox="644 636 120 12">
   <g id="docic2"><path d="M650,637.4l4,-0.5l-1.8,8.6l-4.8,0.2Z" fill="#161a4a"/><path d="M651,637.1l3.2,-0.6l-0.7,3.4Z" fill="#d32b2b"/><path d="M647.2,644.8l5.2,0l-0.2,1.2l-5.2,0Z" fill="#3c5fa8"/></g>
   <rect x="743.5" y="637" width="8" height="9.5" rx="1" fill="#dfe6f5"/>
   <use href="#docic2" x="97"/>
  </svg>
 </div>
 <div id="status" class="abs">
  <span style="left:2px">Preselected: Unnamed1.Body.Pad002.Face13 (8.21 mm, 37.00 mm, 62.80 mm)</span>
  <svg class="abs" style="left:924px;top:7px" width="9" height="11" viewBox="0 0 9 11"><rect x="1.5" y="1" width="6" height="9" rx="2.8" fill="none" stroke="#444" stroke-width="1"/><path d="M4.5,1v3.2" stroke="#444" stroke-width="0.8"/></svg>
  <span style="left:937px;font-size:8.3px;top:7.500px">CAD</span>
  <span style="left:992px">513,22 mm x 332,01 mm</span>
 </div>
</div>
<div id="dock" class="abs">
<svg style="left:4.4px" width="28" height="28" viewBox="0 0 28 28"><defs><clipPath id="cf"><rect x="1" y="1" width="26" height="26" rx="6"/></clipPath></defs><g clip-path="url(#cf)"><rect x="1" y="1" width="26" height="26" fill="#2b8ff2"/><path d="M15,1h12v26h-10q-2.5,-7 -1,-12h-3q0.5,-8 2,-14Z" fill="#e9eef3"/><path d="M1,15h13" stroke="#1f6fd0" stroke-width="0"/></g><path d="M8.5,9v3M20,9v3" stroke="#15406f" stroke-width="1.3" stroke-linecap="round"/><path d="M7,18q7,5 14.5,0" stroke="#15406f" stroke-width="1.2" fill="none" stroke-linecap="round"/></svg>
<svg style="left:39.7px" width="28" height="28" viewBox="0 0 28 28"><rect x="1" y="1" width="26" height="26" rx="6" fill="#d4d6da"/><rect x="5.0" y="5.0" width="5.2" height="5.2" rx="1.2" fill="#7bd14a"/><rect x="11.3" y="5.0" width="5.2" height="5.2" rx="1.2" fill="#f2b93b"/><rect x="17.6" y="5.0" width="5.2" height="5.2" rx="1.2" fill="#e98d3a"/><rect x="5.0" y="11.3" width="5.2" height="5.2" rx="1.2" fill="#e0242f"/><rect x="11.3" y="11.3" width="5.2" height="5.2" rx="1.2" fill="#f04a7b"/><rect x="17.6" y="11.3" width="5.2" height="5.2" rx="1.2" fill="#d83a3a"/><rect x="5.0" y="17.6" width="5.2" height="5.2" rx="1.2" fill="#8a3fd0"/><rect x="11.3" y="17.6" width="5.2" height="5.2" rx="1.2" fill="#3a8de0"/><rect x="17.6" y="17.6" width="5.2" height="5.2" rx="1.2" fill="#3fc46b"/></svg>
<svg style="left:75.0px" width="28" height="28" viewBox="0 0 28 28"><rect x="1" y="1" width="26" height="26" rx="6" fill="#fff"/><rect x="11" y="6" width="12" height="15" rx="1.5" fill="#1c8fe0"/><rect x="11" y="13" width="12" height="8" rx="1" fill="#0f5fb4"/><rect x="4.5" y="9" width="11" height="11" rx="2" fill="#0f6ac8"/><circle cx="10" cy="14.5" r="3" fill="none" stroke="#fff" stroke-width="1.5"/></svg>
<svg style="left:110.2px" width="28" height="28" viewBox="0 0 28 28"><defs><linearGradient id="gas" x1="0" y1="0" x2="0" y2="1"><stop offset="0" stop-color="#2da4f7"/><stop offset="1" stop-color="#1463e0"/></linearGradient></defs><rect x="1" y="1" width="26" height="26" rx="6" fill="url(#gas)"/><path d="M14,7l-6.5,12M14,7l6.5,12M6.5,16.5h15" stroke="#fff" stroke-width="2" fill="none" stroke-linecap="round"/></svg>
<svg style="left:180.7px" width="28" height="28" viewBox="0 0 28 28"><rect x="1" y="1" width="26" height="26" rx="6" fill="#fff"/><rect x="10" y="6" width="13" height="16" rx="1.5" fill="#2b6fd6"/><rect x="10" y="14" width="13" height="8" rx="1" fill="#174aa8"/><rect x="4.5" y="9" width="11" height="11" rx="2" fill="#1b58bd"/><path d="M7,11.5l1.5,6l1.5,-4.5l1.5,4.5l1.5,-6" stroke="#fff" stroke-width="1.1" fill="none"/></svg>
<svg style="left:216.0px" width="28" height="28" viewBox="0 0 28 28"><rect x="1" y="1" width="26" height="26" rx="6" fill="#fff"/><path d="M14,15l9,4l-9,4l-9,-4Z" fill="#e8452e"/><path d="M14,12l9,4l-9,4l-9,-4Z" fill="#f2a33a"/><path d="M14,9l9,4l-9,4l-9,-4Z" fill="#8ccf4d"/><path d="M14,5l9,4l-9,4l-9,-4Z" fill="#3aa0e8"/></svg>
<svg style="left:251.0px" width="28" height="28" viewBox="0 0 28 28"><rect x="1" y="1" width="26" height="26" rx="6" fill="#fff"/><path d="M8,5h8l5,5v13h-13Z" fill="#f4f4f4" stroke="#333" stroke-width="1.6" stroke-linejoin="round"/><path d="M16,5v5h5" fill="#bbb" stroke="#333" stroke-width="1.2"/></svg>
<svg style="left:285.7px" width="28" height="28" viewBox="0 0 28 28"><rect x="1" y="1" width="26" height="26" rx="6" fill="#9a9c9e"/><circle cx="14" cy="14" r="10" fill="#55585b" stroke="#2f3133" stroke-width="1.4"/><circle cx="14" cy="14" r="6" fill="none" stroke="#8b8e91" stroke-width="1.6"/><circle cx="14" cy="14" r="2" fill="#9a9c9e"/></svg>
<svg style="left:321.0px" width="28" height="28" viewBox="0 0 28 28"><rect x="1" y="1" width="26" height="26" rx="6" fill="#f2f4f6"/><circle cx="14" cy="14" r="10.5" fill="#2a8ff0"/><circle cx="14" cy="14" r="10.5" fill="none" stroke="#dfe6ee" stroke-width="1"/><path d="M20,8l-4.6,7.4l-2.8,-2.8Z" fill="#f04a3a"/><path d="M8,20l4.6,-7.4l2.8,2.8Z" fill="#fff"/></svg>
<svg style="left:356.0px" width="28" height="28" viewBox="0 0 28 28"><rect x="1" y="1" width="26" height="26" rx="6" fill="#fff"/><circle cx="14" cy="14" r="10" fill="#e94335"/><path d="M14,14L5.3,9A10,10 0 0 0 14,24Z" fill="#34a853"/><path d="M14,14l0,10A10,10 0 0 0 22.7,9Z" fill="#fbbc05"/><path d="M14,14L5.3,9A10,10 0 0 1 22.7,9Z" fill="#e94335"/><circle cx="14" cy="14" r="4.6" fill="#fff"/><circle cx="14" cy="14" r="3.6" fill="#4285f4"/></svg>
<svg style="left:391.5px" width="28" height="28" viewBox="0 0 28 28"><rect x="1" y="1" width="26" height="26" rx="6" fill="#fff"/><ellipse cx="14" cy="14" rx="9.5" ry="10" fill="#e0162b"/><ellipse cx="14" cy="14" rx="4.2" ry="7.2" fill="#fff"/></svg>
<svg style="left:426.0px" width="28" height="28" viewBox="0 0 28 28"><rect x="1" y="1" width="26" height="26" rx="6" fill="#fff"/><path d="M9,5h10l2,2.5l1.5,0.5l-1,4l-2.5,8l-5,4l-5,-4l-2.5,-8l-1,-4l1.5,-0.5Z" fill="#f0512a"/><path d="M10,9.5h8l-1.5,3l1,2l-3.5,4.5l-3.5,-4.5l1,-2Z" fill="#fff"/><path d="M14,11v5" stroke="#f0512a" stroke-width="1.4"/></svg>
<svg style="left:461.5px" width="28" height="28" viewBox="0 0 28 28"><rect x="1" y="1" width="26" height="26" rx="6" fill="#fff"/><defs><linearGradient id="ged" x1="0" y1="0" x2="1" y2="1"><stop offset="0" stop-color="#35c1a0"/><stop offset="1" stop-color="#0d5fc4"/></linearGradient></defs><circle cx="14" cy="14" r="10" fill="url(#ged)"/><path d="M8,17a7,7 0 0 1 14,-4q0,3.5 -4,3.5q-2,0 -2,-1.5q1,-2 -1.5,-3.2q-4,0 -4,5a6,6 0 0 0 6,6.5a10,10 0 0 1 -8.5,-6.3Z" fill="#1a7ad4"/><path d="M14.5,11.8q2.5,1.2 1.5,3.2q0,1.5 2,1.5q4,0 4,-3.5q-3,-5 -7.5,-1.2Z" fill="#fff"/></svg>
<svg style="left:496.7px" width="28" height="28" viewBox="0 0 28 28"><rect x="1" y="1" width="26" height="26" rx="6" fill="#1f2a3a" stroke="#8e98a6" stroke-width="1"/><circle cx="14" cy="9" r="3.6" fill="#4cc3f0"/><circle cx="9" cy="17.5" r="3.6" fill="#f3d53a"/><circle cx="19" cy="17.5" r="3.6" fill="#e9435f"/><path d="M14,12.5v3M14,15.5l-2.5,1.2M14,15.5l2.5,1.2" stroke="#ddd" stroke-width="0.8"/></svg>
<svg style="left:531.0px" width="28" height="28" viewBox="0 0 28 28"><rect x="1" y="1" width="26" height="26" rx="6" fill="#16171a"/><rect x="6" y="12" width="16" height="10" rx="1" fill="none" stroke="#f4ecd0" stroke-width="2"/><path d="M6,10l15,-3" stroke="#f2c94c" stroke-width="2.4"/><path d="M6,12h16" stroke="#f4ecd0" stroke-width="1.4"/><path d="M18,5.5l3,0l0,2" stroke="#f2c94c" stroke-width="1" fill="none"/></svg>
<svg style="left:567.0px" width="28" height="28" viewBox="0 0 28 28"><rect x="1" y="1" width="26" height="26" rx="6" fill="#43d854"/><circle cx="14" cy="13.6" r="7.6" fill="none" stroke="#fff" stroke-width="1.8"/><path d="M7.5,21.5l1.4,-4.4l3,3Z" fill="#fff"/><path d="M11,10.5q-0.5,3 2.5,5.2q2,1.4 3.6,0.4l-1.5,-1.6l-1.2,0.6q-1.6,-1 -2.2,-2.6l0.7,-1Z" fill="#fff"/></svg>
<svg style="left:601.5px" width="28" height="28" viewBox="0 0 28 28"><rect x="1" y="1" width="26" height="26" rx="6" fill="#fff"/><ellipse cx="14" cy="13.5" rx="9.6" ry="9.2" fill="#1a6cf2"/><path d="M9,21.5l-0.4,3.5l3.6,-2Z" fill="#1a6cf2"/><path d="M8,16.5l4.5,-5l2.6,2.4l4.6,-2.6l-4.5,5l-2.6,-2.4Z" fill="#fff"/></svg>
<svg style="left:636.8px" width="28" height="28" viewBox="0 0 28 28"><circle cx="14" cy="14" r="12.5" fill="#22d05a"/><path d="M7,10.5q7.5,-2.4 14.5,1.2" stroke="#10301a" stroke-width="2.2" fill="none" stroke-linecap="round"/><path d="M7.8,14.6q6.5,-1.8 12.2,1" stroke="#10301a" stroke-width="1.9" fill="none" stroke-linecap="round"/><path d="M8.6,18.4q5.4,-1.4 10,0.8" stroke="#10301a" stroke-width="1.6" fill="none" stroke-linecap="round"/></svg>
<svg style="left:669.0px" width="34" height="34" viewBox="-3 -3 34 34"><rect x="-3" y="-2.500" width="34" height="33" fill="#050505"/><circle cx="14" cy="14" r="16.300" fill="#4caa78"/><g transform="translate(14 14) scale(1.250) translate(-14 -14)"><path d="M13.500,14q-3,-9 -7.500,-7.500q-1.500,5 7.500,8.500Z" fill="#fff"/><path d="M15,14.500q3,-9 8.500,-8q1.500,6 -8.500,9Z" fill="#fff"/><path d="M13.400,16q-6,-0.500 -7,4q3.500,3.500 7.400,-3Z" fill="#fff"/><path d="M15,16.400q5,-0.500 6,4q-3.500,3.800 -6.400,-3Z" fill="#fff"/></g></svg>
<svg style="left:707.5px" width="28" height="28" viewBox="0 0 28 28"><rect x="1" y="1" width="26" height="26" rx="6" fill="#1f2024"/><path d="M6,5h8v18h-8Z" fill="#d6232f"/><path d="M14,5h8v18h-8Z" fill="#2b67c9"/><path d="M9.5,7.5h9v3h-5.5v3h4v3h-4v5h-3.5Z" fill="#fff"/><circle cx="19" cy="19" r="3.4" fill="#2b67c9" stroke="#123a7e" stroke-width="0.8"/></svg>
<svg style="left:757.0px" width="28" height="28" viewBox="0 0 28 28"><rect x="0" y="1.500" width="28" height="4.500" fill="#0e0e10"/><rect x="0" y="5.500" width="28" height="3" fill="#d9d9dd"/><rect x="0" y="8.500" width="28" height="14" fill="#eeeef1"/><rect x="6" y="10" width="22" height="11" fill="#5b587e"/><path d="M0,12h6M0,15h6M0,18h6" stroke="#aaa" stroke-width="1"/><rect x="0" y="22" width="28" height="4.500" fill="#0e0e10"/></svg>
<svg style="left:792.5px" width="28" height="28" viewBox="0 0 28 28"><defs><linearGradient id="gtr" x1="0" y1="0" x2="1" y2="0"><stop offset="0" stop-color="#d6dadf"/><stop offset="0.5" stop-color="#f4f6f8"/><stop offset="1" stop-color="#cfd4da"/></linearGradient></defs><path d="M4.5,4h19l-2.5,21.5q-7,1.6 -14,0Z" fill="url(#gtr)" stroke="#c2c7cd" stroke-width="0.6"/><ellipse cx="14" cy="4.2" rx="9.5" ry="1.6" fill="#e9ecef" stroke="#c2c7cd" stroke-width="0.6"/></svg>
<div class="abs" style="left:746.5px;top:6px;width:1px;height:29px;background:rgba(40,50,60,.45)"></div>
<div class="dot" style="left:17.2px"></div>
<div class="dot" style="left:368.8px"></div>
<div class="dot" style="left:649.6px"></div>
<div class="dot" style="left:720.3px"></div>
</div>
</body>
</html>
